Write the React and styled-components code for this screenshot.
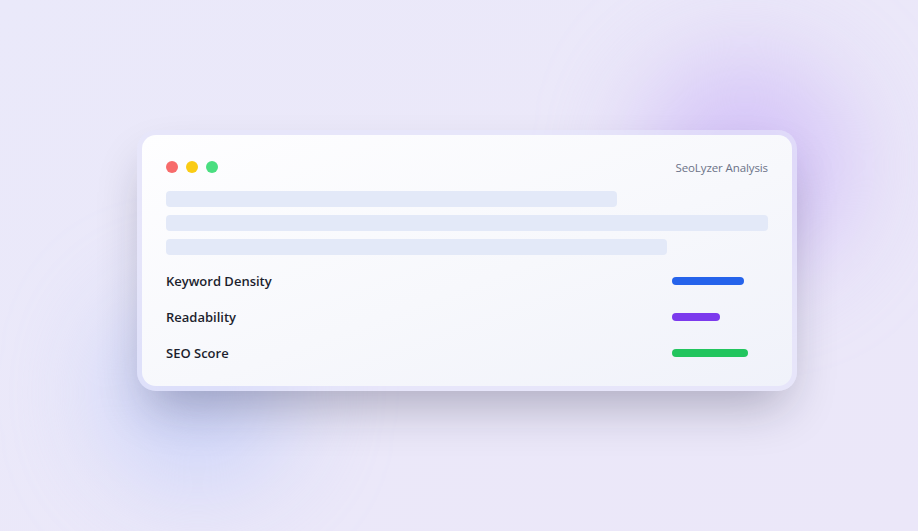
import React from 'react';
import styled, { createGlobalStyle } from 'styled-components';

const GlobalStyle = createGlobalStyle`
  html, body {
    margin: 0;
    padding: 0;
    background: #ebe8f9;
  }
`

const Page = styled.div`
  position: relative;
  width: 918px;
  height: 531px;
  overflow: hidden;
  display: flex;
  align-items: center;
  justify-content: center;
  padding: 0 0 10px 16px;
  box-sizing: border-box;
  background: linear-gradient(135deg, #eae9fa 0%, #ebe8f9 50%, #ebe7f9 100%);
  font-family: "Open Sans", "Liberation Sans", sans-serif;
`

const Glow = styled.div`
  position: absolute;
  border-radius: 50%;
  filter: blur(50px);
  left: ${p => p.$x}px;
  top: ${p => p.$y}px;
  width: ${p => p.$size}px;
  height: ${p => p.$size}px;
  background: ${p => p.$color};
`

const Frame = styled.div`
  position: relative;
  padding: 5px;
  border-radius: 19px;
  background: rgba(228, 228, 250, 0.6);
  box-shadow: 0 25px 50px -12px rgba(20, 20, 50, 0.3);
`

const Card = styled.div`
  width: 650px;
  box-sizing: border-box;
  padding: 24px 24px 23px;
  border-radius: 14px;
  background: linear-gradient(160deg, #fefeff 0%, #f7f8fc 55%, #f0f2fa 100%);
  display: flex;
  flex-direction: column;
`

const Header = styled.div`
  display: flex;
  align-items: center;
  justify-content: space-between;
  height: 16px;
  margin-bottom: 16px;
`

const Dots = styled.div`
  display: flex;
  gap: 8px;
`

const Dot = styled.span`
  width: 12px;
  height: 12px;
  border-radius: 50%;
  background: ${p => p.$color};
`

const Title = styled.span`
  font-size: 11.5px;
  color: #6b7287;
  letter-spacing: -0.1px;
`

const Lines = styled.div`
  display: flex;
  flex-direction: column;
  gap: 8px;
  margin-bottom: 16px;
`

const Line = styled.div`
  height: 16px;
  border-radius: 4px;
  background: #e3e9f8;
  width: ${p => p.$width};
`

const Metric = styled.div`
  display: flex;
  align-items: center;
  height: 20px;
  & + & {
    margin-top: 16px;
  }
`

const Label = styled.span`
  flex: 1;
  font-size: 13px;
  font-weight: 600;
  color: #1d1f2e;
`

const Track = styled.div`
  width: 96px;
`

const Bar = styled.div`
  height: 8px;
  border-radius: 4px;
  background: ${p => p.$color};
`

const metrics = [
  { label: 'Keyword Density', width: 72, color: '#2563eb' },
  { label: 'Readability', width: 48, color: '#7c3aed' },
  { label: 'SEO Score', width: 76, color: '#22c55e' },
];

const App = () => {
  return (
    <Page>
      <GlobalStyle />
      <Glow $x={640} $y={60} $size={210} $color="rgba(196, 170, 246, 0.6)" />
      <Glow $x={105} $y={300} $size={185} $color="rgba(178, 194, 250, 0.55)" />
      <Frame>
        <Card>
          <Header>
            <Dots>
              <Dot $color="#f76b6b" />
              <Dot $color="#facc15" />
              <Dot $color="#4ade80" />
            </Dots>
            <Title>SeoLyzer Analysis</Title>
          </Header>
          <Lines>
            <Line $width="451px" />
            <Line $width="100%" />
            <Line $width="501px" />
          </Lines>
          {metrics.map(m => (
            <Metric key={m.label}>
              <Label>{m.label}</Label>
              <Track>
                <Bar $color={m.color} style={{ width: m.width }} />
              </Track>
            </Metric>
          ))}
        </Card>
      </Frame>
    </Page>
  );
}

export default App;
